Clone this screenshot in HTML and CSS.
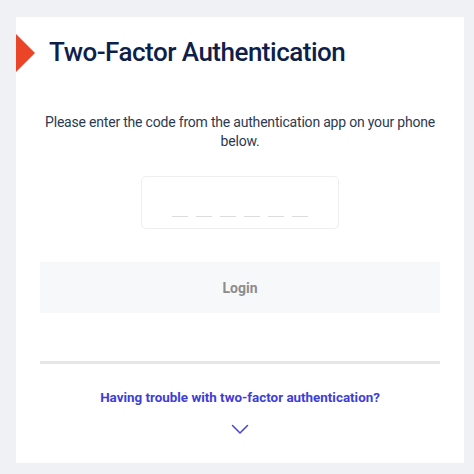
FILE: index.html
```html
<!DOCTYPE html>
<html lang="en">
<head>
<meta charset="utf-8">
<title>Two-Factor Authentication</title>
<link rel="stylesheet" href="styles.css">
</head>
<body>
<main class="card">
  <header class="header">
    <span class="marker"></span>
    <h1 class="title">Two-Factor Authentication</h1>
  </header>
  <p class="intro">Please enter the code from the authentication app on your phone below.</p>
  <div class="code-box">
    <span class="dash"></span><span class="dash"></span><span class="dash"></span><span class="dash"></span><span class="dash"></span><span class="dash"></span>
  </div>
  <button class="login" type="button">Login</button>
  <hr class="divider">
  <a class="help" href="#">Having trouble with two-factor authentication?</a>
  <svg class="chevron" width="18" height="11" viewBox="0 0 18 11"><path d="M1.5 1.5 L9 9 L16.5 1.5" fill="none" stroke="#4a4ad6" stroke-width="1.6" stroke-linecap="round" stroke-linejoin="round"/></svg>
</main>
</body>
</html>
```

FILE: styles.css
```css
* { box-sizing: border-box; }
html, body { margin: 0; padding: 0; }
body {
  background: #f0f1f5;
  padding: 17px 10px 11px 16px;
  font-family: Roboto, "Liberation Sans", Arial, sans-serif;
}
.card {
  width: 448px;
  height: 446px;
  background: #ffffff;
  display: flex;
  flex-direction: column;
  align-items: center;
}
.header {
  align-self: stretch;
  display: flex;
  align-items: center;
  gap: 14px;
  padding-top: 16px;
  height: 55px;
}
.marker {
  width: 0;
  height: 0;
  border-top: 19.5px solid transparent;
  border-bottom: 19.5px solid transparent;
  border-left: 19px solid #ea4429;
}
.title {
  margin: 0;
  font-size: 26px;
  font-weight: 500;
  color: #0f1f4b;
  letter-spacing: -0.5px;
  line-height: 39px;
}
.intro {
  margin: 41px 0 0;
  width: 400px;
  text-align: center;
  font-size: 14px;
  letter-spacing: -0.2px;
  line-height: 19px;
  color: #2c3a52;
}
.code-box {
  margin-top: 25px;
  width: 198px;
  height: 53px;
  border: 1px solid #eeeeee;
  border-radius: 5px;
  display: flex;
  justify-content: center;
  align-items: flex-end;
  gap: 8px;
  padding-bottom: 11px;
}
.dash {
  width: 16px;
  height: 1px;
  background: #dcdcdc;
}
.login {
  margin-top: 33px;
  width: 400px;
  height: 51px;
  border: none;
  background: #f7f8fa;
  font-family: inherit;
  font-size: 14px;
  font-weight: 700;
  color: #8c8c8c;
}
.divider {
  margin: 48px 0 0;
  width: 400px;
  height: 3px;
  border: none;
  background: #e6e6e6;
}
.help {
  margin-top: 25px;
  font-size: 13.4px;
  font-weight: 700;
  line-height: 18px;
  color: #3d3ddb;
  text-decoration: none;
}
.chevron {
  margin-top: 17px;
  display: block;
}
```
